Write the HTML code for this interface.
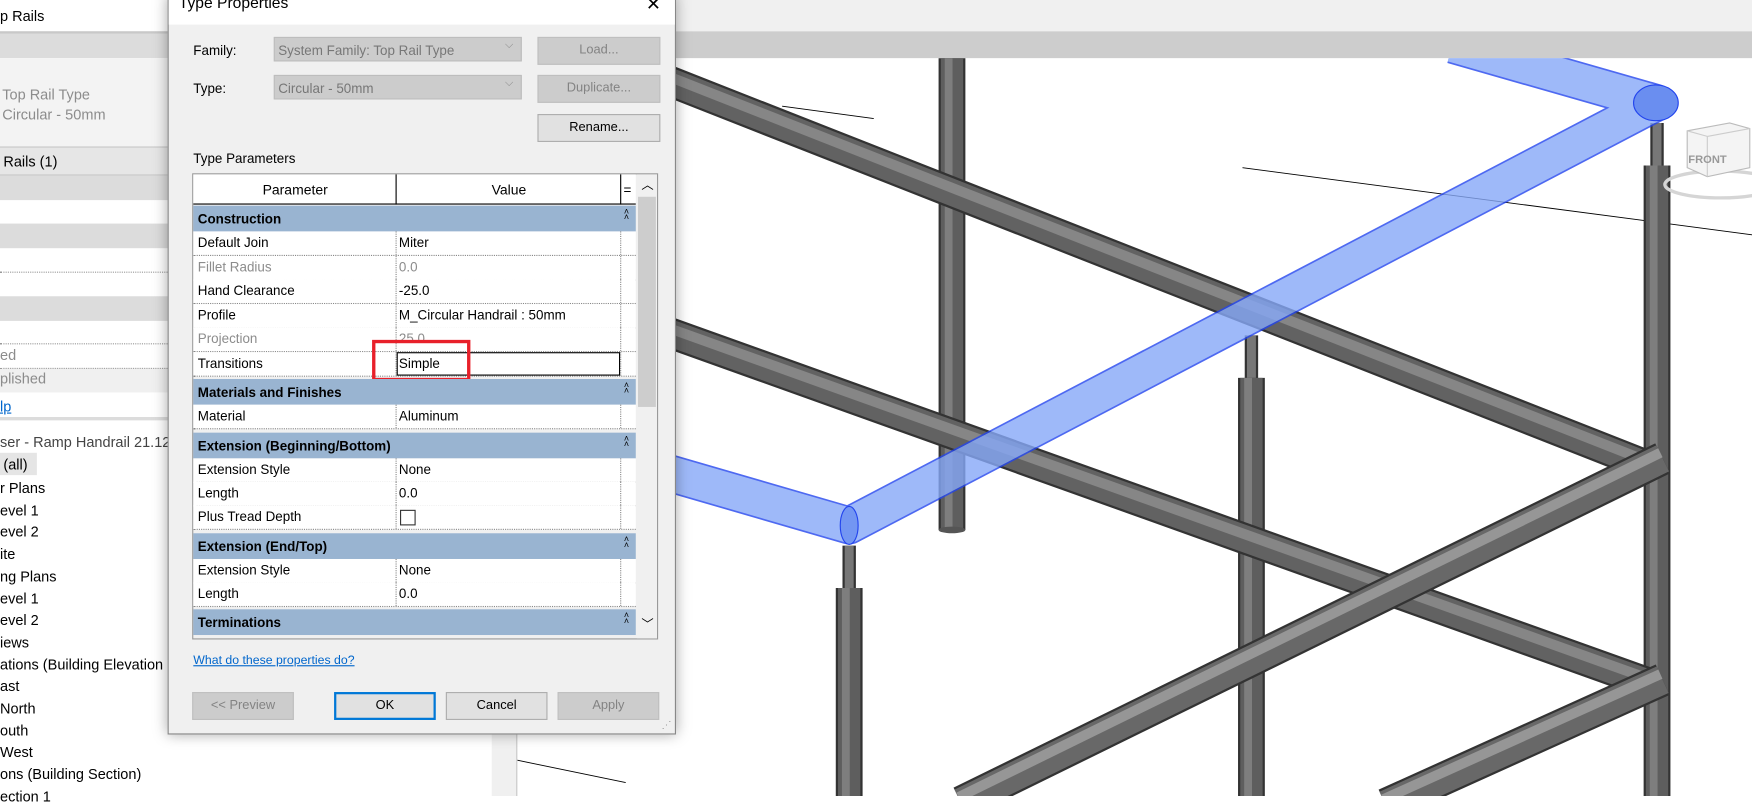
<!DOCTYPE html>
<html><head><meta charset="utf-8">
<style>
*{margin:0;padding:0;box-sizing:border-box}
html,body{width:1752px;height:796px;overflow:hidden;background:#fff}
#w{position:absolute;left:0;top:0;width:1568px;height:712px;transform:scale(1.11735,1.11798);transform-origin:0 0;font-family:"Liberation Sans",sans-serif;font-size:12px;color:#000}
.a{position:absolute}
.t{position:absolute;white-space:nowrap}
.row{position:absolute;left:0;width:440px}
.btn{position:absolute;background:#e1e1e1;border:1px solid #adadad;text-align:center;line-height:22px;font-size:11.5px}
.dis{background:#cccccc;border-color:#bfbfbf;color:#838383}
.tr{position:absolute;left:173px;width:396px;height:22px;border-bottom:1px dotted #888;background:#fff}
.tr .p{position:absolute;left:4px;top:3px}
.tr .v{position:absolute;left:184px;top:3px}
.tr .c1{position:absolute;left:181px;top:0;bottom:0;border-left:1px dotted #888}
.tr .c2{position:absolute;left:382px;top:0;bottom:0;border-left:1px dotted #888}
.sh{position:absolute;left:173px;width:396px;height:23px;background:#99b4d1;font-weight:bold;padding:5px 4px}
.sh i{position:absolute;right:6px;top:0px;font-style:normal;font-size:8px;font-weight:normal;line-height:5px;padding-top:3px}
.g{color:#8c8c8c}
</style></head><body><div id="w">
<!-- viewport -->
<div class="a" style="left:440px;top:0;width:1128px;height:28px;background:#f0f0f0"></div>
<div class="a" style="left:440px;top:28px;width:1128px;height:24px;background:#cdcdcd"></div>
<div class="a" style="left:440px;top:52px;width:23px;height:660px;background:#f0f0f0"></div>
<div class="a" style="left:462px;top:52px;width:1px;height:660px;background:#c8c8c8"></div>
<svg class="a" style="left:0;top:0" width="1568" height="712" viewBox="0 0 1568 712">
<defs><clipPath id="cp"><rect x="463" y="52" width="1105" height="660"/></clipPath></defs>
<g stroke-linecap="butt" fill="none" clip-path="url(#cp)">
<line x1="700" y1="95" x2="782" y2="106" stroke="#000" stroke-width="0.8"/>
<line x1="1112" y1="150" x2="1568" y2="210" stroke="#000" stroke-width="0.8"/>
<line x1="463" y1="680" x2="560" y2="700" stroke="#000" stroke-width="0.8"/>
<!-- posts -->
<g>
<line x1="852" y1="52" x2="852" y2="474" stroke="#333" stroke-width="24"/>
<line x1="852" y1="52" x2="852" y2="474" stroke="#5e5e5e" stroke-width="20"/>
<line x1="849" y1="52" x2="849" y2="474" stroke="#7e7e7e" stroke-width="7"/>
<ellipse cx="852" cy="474" rx="12" ry="3" fill="#555"/>
</g>
<g>
<line x1="1120" y1="300" x2="1120" y2="340" stroke="#333" stroke-width="12"/>
<line x1="1120" y1="300" x2="1120" y2="340" stroke="#777" stroke-width="8"/>
<line x1="1120" y1="338" x2="1120" y2="712" stroke="#333" stroke-width="24"/>
<line x1="1120" y1="338" x2="1120" y2="712" stroke="#5e5e5e" stroke-width="20"/>
<line x1="1117" y1="338" x2="1117" y2="712" stroke="#7e7e7e" stroke-width="7"/>
<line x1="1483" y1="110" x2="1483" y2="150" stroke="#333" stroke-width="12"/>
<line x1="1483" y1="110" x2="1483" y2="150" stroke="#777" stroke-width="8"/>
<line x1="1483" y1="148" x2="1483" y2="712" stroke="#333" stroke-width="24"/>
<line x1="1483" y1="148" x2="1483" y2="712" stroke="#5e5e5e" stroke-width="20"/>
<line x1="1480" y1="148" x2="1480" y2="712" stroke="#7e7e7e" stroke-width="7"/>
<line x1="760" y1="488" x2="760" y2="528" stroke="#333" stroke-width="12"/>
<line x1="760" y1="488" x2="760" y2="528" stroke="#777" stroke-width="8"/>
<line x1="760" y1="526" x2="760" y2="712" stroke="#333" stroke-width="24"/>
<line x1="760" y1="526" x2="760" y2="712" stroke="#5e5e5e" stroke-width="20"/>
<line x1="757" y1="526" x2="757" y2="712" stroke="#7e7e7e" stroke-width="7"/>
</g>
<!-- rails down-right -->
<g>
<line x1="600" y1="73" x2="1478" y2="418" stroke="#333" stroke-width="28"/>
<line x1="600" y1="73" x2="1478" y2="418" stroke="#626262" stroke-width="24"/>
<line x1="600" y1="69" x2="1478" y2="414" stroke="#868686" stroke-width="9"/>
<line x1="600" y1="298" x2="1478" y2="612" stroke="#333" stroke-width="28"/>
<line x1="600" y1="298" x2="1478" y2="612" stroke="#626262" stroke-width="24"/>
<line x1="600" y1="294" x2="1478" y2="608" stroke="#868686" stroke-width="9"/>
</g>
<!-- diagonal up-right -->
<g>
<line x1="1488" y1="410" x2="860" y2="718" stroke="#333" stroke-width="30"/>
<line x1="1488" y1="410" x2="860" y2="718" stroke="#686868" stroke-width="26"/>
<line x1="1486" y1="405" x2="858" y2="713" stroke="#969696" stroke-width="9"/>
<line x1="1488" y1="608" x2="1240" y2="720" stroke="#333" stroke-width="30"/>
<line x1="1488" y1="608" x2="1240" y2="720" stroke="#686868" stroke-width="26"/>
<line x1="1486" y1="603" x2="1238" y2="715" stroke="#969696" stroke-width="9"/>
</g>
<!-- blue rail -->
<g opacity="0.8">
<polyline points="560,412 760,470 1482,92 1300,40" stroke="#2244ee" stroke-width="34" stroke-linejoin="round"/>
<polyline points="560,412 760,470 1482,92 1300,40" stroke="#86a8f8" stroke-width="31" stroke-linejoin="round"/>
</g>
<ellipse cx="1482" cy="92" rx="20" ry="16" fill="#6a8ef0" stroke="#2244ee" stroke-width="1"/>
<ellipse cx="760" cy="470" rx="8" ry="17" fill="#7396f2" stroke="#2244ee" stroke-width="1"/>
<!-- view cube -->
<ellipse cx="1540" cy="165" rx="50" ry="12" stroke="#d5d5d5" stroke-width="3"/>
<polygon points="1510,117 1548,110 1566,115 1566,150 1528,158 1510,150" fill="#f4f4f4" stroke="#bbb"/>
<line x1="1528" y1="122" x2="1528" y2="158" stroke="#ccc"/>
<line x1="1510" y1="117" x2="1528" y2="122" stroke="#ccc"/>
<line x1="1528" y1="122" x2="1566" y2="115" stroke="#ccc"/>
<text x="1511" y="146" font-size="10" fill="#999" font-family="Liberation Sans" font-weight="bold">FRONT</text>
</g>
</svg>

<!-- left panel -->
<div class="a" style="left:0;top:0;width:440px;height:712px;background:#fff"></div>
<div class="t" style="left:0;top:7px;font-size:13px">p Rails</div>
<div class="row" style="top:28px;height:24px;background:#dcdcdc;border-top:2px solid #c8c8c8"></div>
<div class="row" style="top:52px;height:80px;background:#f3f3f3"></div>
<div class="t g" style="left:2px;top:77px;font-size:13px">Top Rail Type</div>
<div class="t g" style="left:2px;top:95px;font-size:13px">Circular - 50mm</div>
<div class="row" style="top:131px;height:26px;background:#e6e6e6;border-top:1px solid #c8c8c8;border-bottom:1px solid #c8c8c8"></div>
<div class="t" style="left:3px;top:137px;font-size:13px">Rails (1)</div>
<div class="row" style="top:157px;height:22px;background:#dcdcdc"></div>
<div class="row" style="top:200px;height:22px;background:#dcdcdc"></div>
<div class="row" style="top:243px;height:1px;border-top:1px dotted #999"></div>
<div class="row" style="top:265px;height:22px;background:#dcdcdc"></div>
<div class="row" style="top:307px;height:1px;border-top:1px dotted #999"></div>
<div class="row" style="top:329px;height:22px;background:#f0f0f0;border-top:1px dotted #999"></div>
<div class="t g" style="left:0;top:310px;font-size:13px">ed</div>
<div class="t g" style="left:0;top:331px;font-size:13px">plished</div>
<div class="t" style="left:0;top:356px;font-size:13px;color:#0066cc;text-decoration:underline">lp</div>
<div class="row" style="top:373px;height:3px;background:#dcdcdc"></div>
<div class="t" style="left:0;top:388px;font-size:13px;color:#444">ser - Ramp Handrail 21.12</div>
<div class="a" style="left:0;top:405px;width:33px;height:20px;background:#e5e5e5"></div>
<div class="t" style="left:3px;top:408px;font-size:13px">(all)</div>
<div class="t" style="left:0;top:427px;font-size:13px;line-height:19.7px">r Plans<br>evel 1<br>evel 2<br>ite<br>ng Plans<br>evel 1<br>evel 2<br>iews<br>ations (Building Elevation<br>ast<br>North<br>outh<br>West<br>ons (Building Section)<br>ection 1</div>

<!-- dialog -->
<div class="a" style="left:150px;top:-5px;width:455px;height:662px;background:#f0f0f0;border:1px solid #888;box-shadow:0 0 12px rgba(0,0,0,.35)"></div>
<div class="a" style="left:151px;top:0;width:453px;height:22px;background:#fff"></div>
<div class="t" style="left:160px;top:-6px;font-size:14px">Type Properties</div>
<div class="t" style="left:578px;top:-6px;font-size:16px">✕</div>
<div class="t" style="left:173px;top:38px">Family:</div>
<div class="a" style="left:245px;top:33px;width:222px;height:22px;background:#ccc;border:1px solid #bdbdbd"></div>
<div class="t" style="left:249px;top:38px;color:#777">System Family: Top Rail Type</div>
<div class="t" style="left:452px;top:35px;color:#888;font-size:10px">⌵</div>
<div class="btn dis" style="left:481px;top:33px;width:110px;height:25px">Load...</div>
<div class="t" style="left:173px;top:72px">Type:</div>
<div class="a" style="left:245px;top:67px;width:222px;height:22px;background:#ccc;border:1px solid #bdbdbd"></div>
<div class="t" style="left:249px;top:72px;color:#777">Circular - 50mm</div>
<div class="t" style="left:452px;top:69px;color:#888;font-size:10px">⌵</div>
<div class="btn dis" style="left:481px;top:67px;width:110px;height:25px">Duplicate...</div>
<div class="btn" style="left:481px;top:102px;width:110px;height:25px">Rename...</div>
<div class="t" style="left:173px;top:135px">Type Parameters</div>
<div class="a" style="left:172px;top:155px;width:417px;height:417px;background:#f0f0f0;border:1px solid #999"></div>
<div class="a" style="left:173px;top:156px;width:396px;height:27px;background:#fff;border-bottom:1px solid #000"></div>
<div class="a" style="left:354px;top:156px;width:1px;height:27px;background:#000"></div>
<div class="a" style="left:555px;top:156px;width:1px;height:27px;background:#000"></div>
<div class="t" style="left:235px;top:163px;font-size:12.5px">Parameter</div>
<div class="t" style="left:440px;top:163px;font-size:12.5px">Value</div>
<div class="t" style="left:558px;top:163px">=</div>
<div class="a" style="left:570px;top:156px;width:18px;height:415px;background:#f0f0f0"></div>
<div class="a" style="left:571px;top:176px;width:16px;height:188px;background:#cdcdcd"></div>
<div class="t" style="left:574px;top:157px;font-size:11px">︿</div>
<div class="t" style="left:574px;top:550px;font-size:11px">﹀</div>

<div class="sh" style="top:184px">Construction<i>˄<br>˄</i></div>
<div class="tr" style="top:207px"><span class="p">Default Join</span><span class="c1"></span><span class="v">Miter</span><span class="c2"></span></div>
<div class="tr" style="top:229px"><span class="p g">Fillet Radius</span><span class="c1"></span><span class="v g">0.0</span><span class="c2"></span></div>
<div class="tr" style="top:250px"><span class="p">Hand Clearance</span><span class="c1"></span><span class="v">-25.0</span><span class="c2"></span></div>
<div class="tr" style="top:272px"><span class="p">Profile</span><span class="c1"></span><span class="v">M_Circular Handrail : 50mm</span><span class="c2"></span></div>
<div class="tr" style="top:293px"><span class="p g">Projection</span><span class="c1"></span><span class="v g">25.0</span><span class="c2"></span></div>
<div class="tr" style="top:315px"><span class="p">Transitions</span><span class="c1"></span><span class="a" style="left:182px;top:0;width:200px;height:21px;border:1px solid #000"></span><span class="v">Simple</span><span class="c2"></span></div>
<div class="a" style="left:333px;top:304px;width:88px;height:37px;border:3px solid #e8202a"></div>
<div class="sh" style="top:339px">Materials and Finishes<i>˄<br>˄</i></div>
<div class="tr" style="top:362px"><span class="p">Material</span><span class="c1"></span><span class="v">Aluminum</span><span class="c2"></span></div>
<div class="sh" style="top:387px">Extension (Beginning/Bottom)<i>˄<br>˄</i></div>
<div class="tr" style="top:410px"><span class="p">Extension Style</span><span class="c1"></span><span class="v">None</span><span class="c2"></span></div>
<div class="tr" style="top:431px"><span class="p">Length</span><span class="c1"></span><span class="v">0.0</span><span class="c2"></span></div>
<div class="tr" style="top:452px"><span class="p">Plus Tread Depth</span><span class="c1"></span><span class="a" style="left:185px;top:4px;width:14px;height:14px;border:1px solid #333"></span><span class="c2"></span></div>
<div class="sh" style="top:477px">Extension (End/Top)<i>˄<br>˄</i></div>
<div class="tr" style="top:500px"><span class="p">Extension Style</span><span class="c1"></span><span class="v">None</span><span class="c2"></span></div>
<div class="tr" style="top:521px"><span class="p">Length</span><span class="c1"></span><span class="v">0.0</span><span class="c2"></span></div>
<div class="sh" style="top:545px">Terminations<i>˄<br>˄</i></div>

<div class="t" style="left:173px;top:585px;font-size:11px;color:#0066cc;text-decoration:underline">What do these properties do?</div>
<div class="btn dis" style="left:172px;top:619px;width:91px;height:25px">&lt;&lt; Preview</div>
<div class="btn" style="left:299px;top:619px;width:91px;height:25px;border:2px solid #0078d7;line-height:21px">OK</div>
<div class="btn" style="left:399px;top:619px;width:91px;height:25px">Cancel</div>
<div class="btn dis" style="left:499px;top:619px;width:91px;height:25px">Apply</div>
<div class="t" style="left:592px;top:643px;font-size:9px;color:#999">⋰</div>
</div></body></html>
